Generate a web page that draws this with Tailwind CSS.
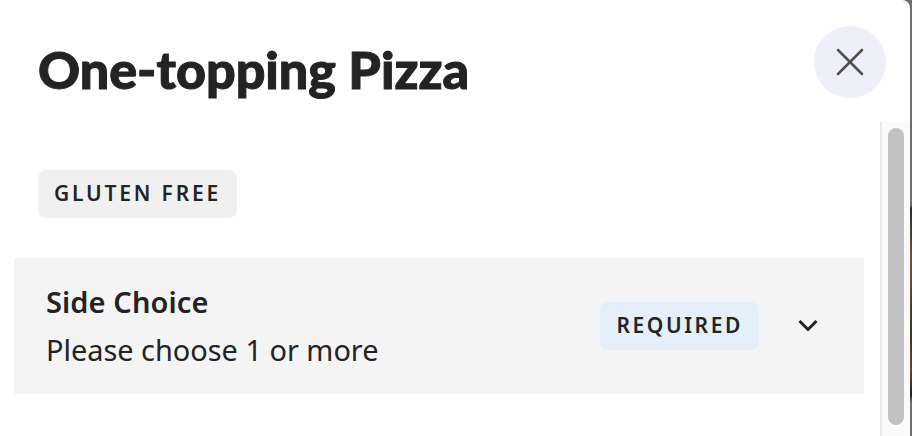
<!DOCTYPE html>
<html lang="en">
<head>
  <meta charset="UTF-8" />
  <title>One-topping Pizza</title>
  <script src="https://cdn.jsdelivr.net/npm/@tailwindcss/browser@4"></script>
</head>
<body class="w-[912px] h-[436px] overflow-hidden bg-[linear-gradient(#6e6e6e_0,#6e6e6e_205px,#2a2a33_208px,#6a5a3c_260px,#3a3328_330px,#5e4a2c_370px,#20202a_395px,#6e6e6e_402px)] font-['Noto_Sans',sans-serif] text-[#232323]">

  <!-- Modal -->
  <div class="w-[910px] h-[436px] bg-white rounded-tr-lg overflow-hidden flex flex-col">

    <!-- Header -->
    <div class="h-[122px] shrink-0 flex justify-between pl-[38px] pr-[24px] pt-[26px]">
      <h1 class="font-['Lato',sans-serif] font-black text-[52px] leading-[86px] [-webkit-text-stroke:1px_#232323]">One-topping Pizza</h1>
      <button class="w-[72px] h-[72px] rounded-full bg-[#eeeef8] flex items-center justify-center">
        <svg width="28" height="28" viewBox="0 0 28 28" fill="none" stroke="#4f4f4f" stroke-width="2.5" stroke-linecap="round"><path d="M2 2 L26 26 M26 2 L2 26"/></svg>
      </button>
    </div>

    <!-- Body -->
    <div class="flex flex-1 min-h-0">
      <div class="flex-1 pl-[14px] pr-[16px]">
        <div class="ml-[24px] mt-[48px] inline-flex items-center h-[48px] px-[16px] rounded-lg bg-[#f0f0f0] text-[21px] font-semibold tracking-[2.8px]">GLUTEN FREE</div>
        <div class="mt-[40px] h-[136px] bg-[#f4f4f4] flex items-center pl-[32px] pr-[46px]">
          <div class="flex-1">
            <div class="text-[29px] font-semibold leading-[48px] tracking-[0.1px]">Side Choice</div>
            <div class="text-[28.9px] leading-[48px]">Please choose 1 or more</div>
          </div>
          <span class="inline-flex items-center h-[48px] px-[16px] rounded-lg bg-[#e5eff9] text-[21px] font-semibold tracking-[2.6px]">REQUIRED</span>
          <svg class="ml-[39px]" width="20" height="14" viewBox="0 0 20 14" fill="none" stroke="#232323" stroke-width="3"><path d="M1.5 2 L10 10.5 L18.5 2"/></svg>
        </div>
      </div>

      <!-- Scrollbar -->
      <div class="w-[30px] shrink-0 bg-[#fafafa] border-l-2 border-[#e8e8e8] pl-[6px] pt-[6px]">
        <div class="w-[16px] h-[297px] rounded-full bg-[#c1c1c1]"></div>
      </div>
    </div>
  </div>
</body>
</html>
